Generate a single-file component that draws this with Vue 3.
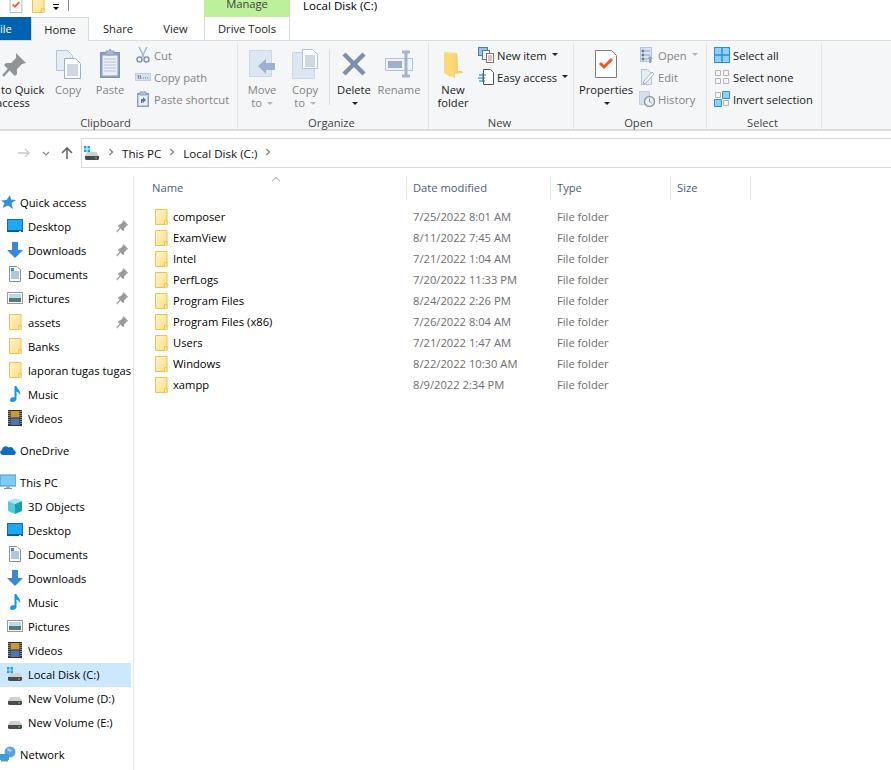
<script setup>
const quick = [
  { name: "Desktop", icon: "desktop", pin: true },
  { name: "Downloads", icon: "downloads", pin: true },
  { name: "Documents", icon: "documents", pin: true },
  { name: "Pictures", icon: "pictures", pin: true },
  { name: "assets", icon: "folder", pin: true },
  { name: "Banks", icon: "folder" },
  { name: "laporan tugas tugas", icon: "folder" },
  { name: "Music", icon: "music" },
  { name: "Videos", icon: "videos" },
];

const thisPc = [
  { name: "3D Objects", icon: "cube" },
  { name: "Desktop", icon: "desktop" },
  { name: "Documents", icon: "documents" },
  { name: "Downloads", icon: "downloads" },
  { name: "Music", icon: "music" },
  { name: "Pictures", icon: "pictures" },
  { name: "Videos", icon: "videos" },
  { name: "Local Disk (C:)", icon: "disk", active: true },
  { name: "New Volume (D:)", icon: "volume" },
  { name: "New Volume (E:)", icon: "volume" },
];

const files = [
  { name: "composer", date: "7/25/2022 8:01 AM" },
  { name: "ExamView", date: "8/11/2022 7:45 AM" },
  { name: "Intel", date: "7/21/2022 1:04 AM" },
  { name: "PerfLogs", date: "7/20/2022 11:33 PM" },
  { name: "Program Files", date: "8/24/2022 2:26 PM" },
  { name: "Program Files (x86)", date: "7/26/2022 8:04 AM" },
  { name: "Users", date: "7/21/2022 1:47 AM" },
  { name: "Windows", date: "8/22/2022 10:30 AM" },
  { name: "xampp", date: "8/9/2022 2:34 PM" },
];
</script>

<template>
  <div class="explorer">
    <svg class="defs" aria-hidden="true">
      <defs>
        <linearGradient id="fold" x1="0" y1="0" x2="1" y2="1">
          <stop offset="0" stop-color="#fff3c8" />
          <stop offset="1" stop-color="#fcdf85" />
        </linearGradient>
        <linearGradient id="bigfold" x1="0" y1="0" x2="1" y2="0">
          <stop offset="0" stop-color="#ffe38c" />
          <stop offset="1" stop-color="#f3c75c" />
        </linearGradient>
        <symbol id="folder" viewBox="0 0 16 16">
          <path d="M2.5 .5h11.500v15H2.5z" fill="url(#fold)" stroke="#eac251" />
          <path d="M11.500 15.500v-4h2.500v4" fill="#fde9a6" stroke="#eac251" />
        </symbol>
        <symbol id="pin" viewBox="0 0 16 16">
          <path d="M9 1l6 6-2 1-3 3 0 3-1.500 .5-6-6L3 7l3-1 2.500-3z" fill="#9a9a9a" transform="translate(0 -1)" />
          <path d="M5 10l-4 5" stroke="#9a9a9a" stroke-width="1.500" />
        </symbol>
        <symbol id="desktop" viewBox="0 0 16 16">
          <rect x="0" y="1" width="16" height="13" fill="#0a6fc4" />
          <rect x="1" y="2" width="14" height="10" fill="#1ea7f2" />
          <rect x="0" y="12.500" width="16" height="1.500" fill="#12557f" />
          <rect x="12" y="13" width="2" height="1" fill="#d9e8f3" />
        </symbol>
        <symbol id="downloads" viewBox="0 0 16 16">
          <path d="M5 0h6v8h5l-8 8-8-8h5z" fill="#3b86d6" />
        </symbol>
        <symbol id="documents" viewBox="0 0 16 16">
          <path d="M2.500 .5h7.500l3.500 3.500v11.500h-11z" fill="#fff" stroke="#8e8e8e" />
          <path d="M4 6h8M4 8h8M4 10h8M4 12h8" stroke="#5e8fc0" />
          <rect x="4" y="2" width="3" height="3" fill="#2f8fdc" />
        </symbol>
        <symbol id="pictures" viewBox="0 0 16 16">
          <rect x=".5" y="2.500" width="15" height="11" fill="#fff" stroke="#9a9a9a" />
          <rect x="2" y="4" width="12" height="4" fill="#bcd9ea" />
          <rect x="2" y="8" width="12" height="4" fill="#4f7f74" />
        </symbol>
        <symbol id="music" viewBox="0 0 16 16">
          <path d="M7.500 0h2c.5 3 5 4.500 3.500 9.500-.5-2.500-2-3.500-3.500-4V13c0 2-2.500 3-4.500 3S2.500 14 3.500 12.500 6 11 7.500 11.500z" fill="#1a95e8" />
        </symbol>
        <symbol id="videos" viewBox="0 0 16 16">
          <rect x="1" y="0" width="14" height="16" fill="#333" />
          <rect x="3.500" y="1" width="9" height="6.500" fill="#c49a3a" />
          <rect x="3.500" y="8.500" width="9" height="6.500" fill="#4d74b8" />
          <path d="M2 1v14M14 1v14" stroke="#ddd" stroke-dasharray="1 1" />
        </symbol>
        <symbol id="star" viewBox="0 0 16 16">
          <path d="M10 1l1 4.500 5 .5-4.500 3L13 15 8 11.500 2.500 14 4.500 9 1 6.500l5.500-.5z" fill="#2f8fdc" />
        </symbol>
        <symbol id="cloud" viewBox="0 0 16 16">
          <path d="M3 13c-3 0-4-4-1-5 0-3 4-5 6.500-2.500C11 4 14 6 13.500 8c2.500 0 3.500 5 0 5z" fill="#0f6cc0" />
        </symbol>
        <symbol id="pc" viewBox="0 0 16 16">
          <rect x="0" y="1" width="16" height="11" fill="#7ecbf5" stroke="#4b95c6" />
          <rect x="6" y="12" width="4" height="2" fill="#9fb8c8" />
          <rect x="4" y="14" width="8" height="1" fill="#7c97a8" />
        </symbol>
        <symbol id="cube" viewBox="0 0 16 16">
          <path d="M8 0l7 3-7 3-7-3z" fill="#a5ecf2" />
          <path d="M1 3l7 3v10l-7-3z" fill="#55cbdb" />
          <path d="M15 3l-7 3v10l7-3z" fill="#1f9cb0" />
        </symbol>
        <symbol id="volume" viewBox="0 0 16 16">
          <path d="M3.500 7h9l2.500 4H1z" fill="#cfcfcf" />
          <path d="M1 11h14v3l-1 1H2l-1-1z" fill="#4a4a4a" />
          <rect x="11" y="12.500" width="2" height="1" fill="#3de05a" />
        </symbol>
        <symbol id="disk" viewBox="0 0 16 16">
          <use href="#volume" x="0" y="0" width="16" height="16" />
          <path d="M0 1h2.500v2.500H0zM3.500 1H6v2.500H3.500zM0 4.500h2.500V7H0zM3.500 4.500H6V7H3.500z" fill="#19a0f0" />
        </symbol>
        <symbol id="network" viewBox="0 0 16 16">
          <circle cx="10" cy="6" r="5.500" fill="#5da3dc" />
          <path d="M7 3c2-1 4 0 5 2-2 1-4 1-5-2z" fill="#a9d3ef" />
          <rect x="0" y="8" width="9" height="6" fill="#3d9be0" />
          <rect x="1" y="14" width="7" height="1.500" fill="#7b8d9b" />
        </symbol>

        <symbol id="bigpin" viewBox="0 0 32 32">
          <path d="M19 5l10 10-4 1-5 5 0 5-2 2-11-11 2-2 5 0 5-5z" fill="#8f9499" />
          <path d="M13 20l-7 8" stroke="#8f9499" stroke-width="2.500" />
        </symbol>
        <symbol id="copy" viewBox="0 0 32 32">
          <path d="M4.500 2.500h11l5 5v15h-16z" fill="#e6ecf6" stroke="#b4c2da" />
          <path d="M12.500 10.500h11l5 5v15h-16z" fill="#fff" stroke="#9eafca" />
          <path d="M15 17h11M15 19h11M15 21h11M15 23h11M15 25h11M15 27h11" stroke="#9eafca" />
        </symbol>
        <symbol id="paste" viewBox="0 0 32 32">
          <rect x="6.500" y="4.500" width="19" height="25" fill="#8c9fbd" stroke="#7f93b3" />
          <rect x="8.500" y="7.500" width="15" height="20" fill="#eaf0f8" />
          <path d="M10 11h12M10 14h12M10 17h12M10 20h12M10 23h12" stroke="#b4c3da" />
          <path d="M12 7V3h3l1-2 1 2h3v4z" fill="#a9b7cd" stroke="#8c9fbd" />
        </symbol>
        <symbol id="cut" viewBox="0 0 16 16">
          <path d="M4 0l5 10M12 0L7 10" stroke="#a9b7cd" stroke-width="1.500" />
          <circle cx="4.500" cy="12.500" r="2.500" fill="none" stroke="#8496b3" stroke-width="1.500" />
          <circle cx="11.500" cy="12.500" r="2.500" fill="none" stroke="#8496b3" stroke-width="1.500" />
        </symbol>
        <symbol id="copypath" viewBox="0 0 16 16">
          <rect x=".5" y="4.500" width="15" height="7" fill="#d5dfee" stroke="#c1cde0" />
          <path d="M3 6l1 4M5 6l1 4M8 9h1M10 9h1M12 9h1" stroke="#6a7d9b" />
        </symbol>
        <symbol id="pasteshort" viewBox="0 0 16 16">
          <rect x="2" y="2" width="12" height="14" fill="#8c9fbd" />
          <rect x="3.500" y="4" width="9" height="10.500" fill="#eaf0f8" />
          <path d="M5 1h6v3H5z" fill="#b4c3da" stroke="#8c9fbd" />
          <path d="M6 12V8h2V6l3 3-3 3v-2H7.500v2z" fill="#5e7496" />
        </symbol>
        <symbol id="moveto" viewBox="0 0 32 32">
          <path d="M3.500 2.500h22v26h-22z" fill="#dde6f3" stroke="#cbd7e9" />
          <path d="M12 18l8-7v4h9v7h-9v4z" fill="#9eb0cb" />
        </symbol>
        <symbol id="copyto" viewBox="0 0 32 32">
          <path d="M3.500 4.500h22v26h-22z" fill="#dde6f3" stroke="#cbd7e9" />
          <path d="M13.500 1.500h10l5 5v14h-15z" fill="#fff" stroke="#b4c2da" />
          <path d="M16 8h10M16 10h10M16 12h10M16 14h10M16 16h10M16 18h10" stroke="#9eafca" />
        </symbol>
        <symbol id="delete" viewBox="0 0 32 32">
          <path d="M6 6l20 20M26 6L6 26" stroke="#7e8fae" stroke-width="4.500" />
        </symbol>
        <symbol id="rename" viewBox="0 0 32 32">
          <rect x="2.500" y="10.500" width="27" height="12" fill="#eef2f9" stroke="#b4c3da" />
          <rect x="5" y="13" width="14" height="7" fill="#9eb0cb" />
          <path d="M19 4h8M23 4v24M19 28h8" stroke="#a4b4ce" stroke-width="3" fill="none" />
        </symbol>
        <symbol id="newfolder" viewBox="0 0 32 32">
          <path d="M7 4l13 1c1 7 1 13 1 18h4l1 2-8 1v4l-11-5z" fill="url(#bigfold)" />
          <path d="M7 4l6 3v22l-6-4z" fill="#fbd977" />
        </symbol>
        <symbol id="newitem" viewBox="0 0 16 16">
          <rect x=".5" y=".5" width="9" height="8" fill="#8fc6ee" stroke="#5f7896" />
          <rect x="4.500" y="3.500" width="7" height="9" fill="#f2f4f7" stroke="#5f7896" />
          <rect x="8.500" y="6.500" width="7" height="9" fill="#fff" stroke="#8a6f72" />
          <path d="M10 9h4M10 11h4M10 13h4" stroke="#c77e7e" />
        </symbol>
        <symbol id="easy" viewBox="0 0 16 16">
          <path d="M5.500 .5h7l3 3v12h-10z" fill="#fff" stroke="#555" />
          <path d="M1 6h7M0 9h7M1 12h6" stroke="#2374b8" stroke-width="1.200" />
          <path d="M5 4v9" stroke="#2374b8" />
        </symbol>
        <symbol id="properties" viewBox="0 0 32 32">
          <path d="M5.500 2.500h16l5 5v22h-21z" fill="#fff" stroke="#7d7d7d" />
          <path d="M10 15l4 4 8-8" fill="none" stroke="#ef5a24" stroke-width="3" />
        </symbol>
        <symbol id="open" viewBox="0 0 16 16">
          <rect x="1.500" y=".5" width="11" height="14" fill="#d9e2f0" stroke="#b4c3da" />
          <path d="M3 3h2v2H3zM3 7h2v2H3zM3 11h2v2H3zM6 4h5M6 8h5M6 12h2" stroke="#8ea1bf" />
          <path d="M8 12l3-3 3 3h-2v4h-2v-4z" fill="#8ea1bf" />
        </symbol>
        <symbol id="edit" viewBox="0 0 16 16">
          <path d="M2.500 .5h6l4 4v11h-10z" fill="#e6ecf6" stroke="#b4c3da" />
          <path d="M5 12l8-9 2 2-8 9-3 1z" fill="#fff" stroke="#a4b4ce" />
        </symbol>
        <symbol id="history" viewBox="0 0 16 16">
          <rect x=".5" y=".5" width="10" height="13" fill="#d5dfee" stroke="#c1cde0" />
          <circle cx="10.500" cy="10.500" r="5" fill="#eef1f6" stroke="#8f9bab" stroke-width="1.500" />
          <path d="M10.500 7.500v3l2 1.500" fill="none" stroke="#7b8797" />
        </symbol>
        <symbol id="selall" viewBox="0 0 16 16">
          <rect x=".5" y=".5" width="15" height="15" fill="#90d0f7" stroke="#2a8fdc" />
          <path d="M8 0v16M0 8h16" stroke="#2a8fdc" stroke-width="1.500" />
        </symbol>
        <symbol id="selnone" viewBox="0 0 16 16">
          <path d="M1.500 1.500h5v5h-5zM9.500 1.500h5v5h-5zM1.500 9.500h5v5h-5zM9.500 9.500h5v5h-5z" fill="none" stroke="#b5b5b5" />
        </symbol>
        <symbol id="invert" viewBox="0 0 16 16">
          <path d="M1.500 1.500h5v5h-5zM9.500 9.500h5v5h-5z" fill="none" stroke="#b5b5b5" />
          <path d="M8.500 .5h7v7h-7zM.5 8.500h7v7h-7z" fill="#90d0f7" stroke="#2a8fdc" />
        </symbol>
        <symbol id="crumb" viewBox="0 0 6 10">
          <path d="M1.500 2l3 3-3 3" fill="none" stroke="#808080" stroke-width="1.300" />
        </symbol>
      </defs>
    </svg>

    <header class="titlebar">
      <div class="qat">
        <svg class="qat-prop"><use href="#properties" /></svg>
        <svg class="qat-folder"><use href="#folder" /></svg>
        <span class="qat-drop"></span>
        <span class="qat-sep"></span>
      </div>
      <div class="manage">Manage</div>
      <div class="title">Local Disk (C:)</div>
    </header>

    <nav class="tabs">
      <div class="tab file">File</div>
      <div class="tab home">Home</div>
      <div class="tab share">Share</div>
      <div class="tab view">View</div>
      <div class="tab drive">Drive Tools</div>
    </nav>

    <section class="ribbon">
      <div class="group clipboard">
        <div class="group-body">
          <div class="big w70">
            <svg class="ic32"><use href="#bigpin" /></svg>
            <span class="dark">Pin to Quick<br />access</span>
          </div>
          <div class="big w40">
            <svg class="ic32"><use href="#copy" /></svg>
            <span>Copy</span>
          </div>
          <div class="big w44">
            <svg class="ic32"><use href="#paste" /></svg>
            <span>Paste</span>
          </div>
          <div class="smalls pl3">
            <div class="small"><svg class="ic16"><use href="#cut" /></svg>Cut</div>
            <div class="small"><svg class="ic16"><use href="#copypath" /></svg>Copy path</div>
            <div class="small"><svg class="ic16"><use href="#pasteshort" /></svg>Paste shortcut</div>
          </div>
        </div>
        <div class="group-label">Clipboard</div>
      </div>

      <div class="group organize">
        <div class="group-body">
          <div class="big w42">
            <svg class="ic32"><use href="#moveto" /></svg>
            <span>Move<br />to <i class="caret grey"></i></span>
          </div>
          <div class="big w42 ml1">
            <svg class="ic32"><use href="#copyto" /></svg>
            <span>Copy<br />to <i class="caret grey"></i></span>
          </div>
          <div class="vline"></div>
          <div class="big w42">
            <svg class="ic32"><use href="#delete" /></svg>
            <span class="dark">Delete<br /><i class="caret"></i></span>
          </div>
          <div class="big w44 ml2">
            <svg class="ic32"><use href="#rename" /></svg>
            <span>Rename</span>
          </div>
        </div>
        <div class="group-label">Organize</div>
      </div>

      <div class="group new">
        <div class="group-body">
          <div class="big w40">
            <svg class="ic32"><use href="#newfolder" /></svg>
            <span class="dark">New<br />folder</span>
          </div>
          <div class="smalls pl5">
            <div class="small dark"><svg class="ic16"><use href="#newitem" /></svg>New item <i class="caret"></i></div>
            <div class="small dark"><svg class="ic16"><use href="#easy" /></svg>Easy access <i class="caret"></i></div>
          </div>
        </div>
        <div class="group-label">New</div>
      </div>

      <div class="group open">
        <div class="group-body">
          <div class="big w64">
            <svg class="ic32"><use href="#properties" /></svg>
            <span class="dark">Properties<br /><i class="caret"></i></span>
          </div>
          <div class="smalls tight">
            <div class="small"><svg class="ic16"><use href="#open" /></svg>Open <i class="caret grey"></i></div>
            <div class="small"><svg class="ic16"><use href="#edit" /></svg>Edit</div>
            <div class="small"><svg class="ic16"><use href="#history" /></svg>History</div>
          </div>
        </div>
        <div class="group-label">Open</div>
      </div>

      <div class="group select">
        <div class="group-body">
          <div class="smalls pl7">
            <div class="small dark"><svg class="ic16"><use href="#selall" /></svg>Select all</div>
            <div class="small dark"><svg class="ic16"><use href="#selnone" /></svg>Select none</div>
            <div class="small dark"><svg class="ic16"><use href="#invert" /></svg>Invert selection</div>
          </div>
        </div>
        <div class="group-label">Select</div>
      </div>
    </section>

    <div class="addressrow">
      <div class="navs">
        <svg class="nav-ic" viewBox="0 0 14 14"><path d="M1 7h11M8 3l4 4-4 4" fill="none" stroke="#ccc" stroke-width="1.300" /></svg>
        <svg class="nav-chev" viewBox="0 0 8 5"><path d="M1 1l3 3 3-3" fill="none" stroke="#888" stroke-width="1.200" /></svg>
        <svg class="nav-ic up" viewBox="0 0 14 14"><path d="M7 13V2M2 7l5-5 5 5" fill="none" stroke="#666" stroke-width="1.600" /></svg>
      </div>
      <div class="address">
        <svg class="ic16"><use href="#disk" /></svg>
        <svg class="chev"><use href="#crumb" /></svg>
        <span>This PC</span>
        <svg class="chev"><use href="#crumb" /></svg>
        <span>Local Disk (C:)</span>
        <svg class="chev"><use href="#crumb" /></svg>
      </div>
    </div>

    <div class="body">
      <aside class="sidebar">
        <div class="node head"><svg class="ic16"><use href="#star" /></svg>Quick access</div>
        <div v-for="item in quick" :key="item.name" class="node">
          <svg class="ic16"><use :href="'#' + item.icon" /></svg>
          <span class="node-name">{{ item.name }}</span>
          <svg v-if="item.pin" class="pin"><use href="#pin" /></svg>
        </div>
        <div class="node head gap"><svg class="ic16"><use href="#cloud" /></svg>OneDrive</div>
        <div class="node head gap"><svg class="ic16"><use href="#pc" /></svg>This PC</div>
        <div v-for="item in thisPc" :key="item.name + item.icon" class="node" :class="{ active: item.active }">
          <svg class="ic16"><use :href="'#' + item.icon" /></svg>
          <span class="node-name">{{ item.name }}</span>
        </div>
        <div class="node head gap"><svg class="ic16"><use href="#network" /></svg>Network</div>
      </aside>

      <main class="list">
        <div class="sort"></div>
        <div class="cols">
          <div class="col c-name">Name</div>
          <div class="col c-date">Date modified</div>
          <div class="col c-type">Type</div>
          <div class="col c-size">Size</div>
        </div>
        <div class="rows">
          <div v-for="f in files" :key="f.name" class="row">
            <div class="c-name file-name"><svg class="ic16"><use href="#folder" /></svg>{{ f.name }}</div>
            <div class="c-date meta">{{ f.date }}</div>
            <div class="c-type meta">File folder</div>
          </div>
        </div>
      </main>
    </div>
  </div>
</template>

<style scoped>
.explorer {
  width: 891px;
  height: 770px;
  overflow: hidden;
  display: flex;
  flex-direction: column;
  background: #fff;
  font-family: "Open Sans", "Noto Sans", sans-serif;
  font-size: 11.2px;
  color: #000;
}
.defs {
  position: absolute;
  width: 0;
  height: 0;
}
.ic16 {
  width: 16px;
  height: 16px;
  flex: none;
}
.ic32 {
  width: 32px;
  height: 32px;
  flex: none;
  display: block;
}

.titlebar {
  height: 17px;
  display: flex;
  flex: none;
  overflow: hidden;
}
.qat {
  width: 204px;
  display: flex;
  align-items: flex-start;
}
.qat-prop {
  width: 18px;
  height: 18px;
  margin: -4px 0 0 7px;
}
.qat-folder {
  width: 16px;
  height: 18px;
  margin: -4px 0 0 5px;
}
.qat-drop {
  width: 6px;
  height: 4px;
  margin: 4px 1px 0 7px;
  border-top: 1px solid #000;
  position: relative;
}
.qat-drop::after {
  content: "";
  position: absolute;
  left: 0;
  top: 2px;
  border: 3px solid transparent;
  border-top-color: #000;
  border-bottom: 0;
}
.qat-sep {
  width: 1px;
  height: 11px;
  margin-left: 8px;
  background: #8a8a8a;
}
.manage {
  width: 86px;
  height: 17px;
  background: #bdf09a;
  color: #444;
  text-align: center;
  line-height: 8px;
}
.title {
  margin-left: 13px;
  line-height: 11px;
  font-size: 11.6px;
}

.tabs {
  height: 23px;
  display: flex;
  flex: none;
}
.tab {
  line-height: 24px;
  text-align: center;
  color: #222;
}
.file {
  width: 56px;
  margin-left: -25px;
  background: #0063b1;
  color: #fff;
}
.home {
  width: 58px;
  height: 24px;
  background: #f5f6f7;
  border: 1px solid #dadbdc;
  border-bottom: 0;
  box-sizing: border-box;
  line-height: 23px;
  position: relative;
  z-index: 1;
}
.share {
  width: 58px;
}
.view {
  width: 57px;
}
.drive {
  width: 86px;
  box-sizing: border-box;
  border: 1px solid #dadbdc;
  border-width: 0 1px;
}

.ribbon {
  height: 91px;
  flex: none;
  display: flex;
  margin-left: -23px;
  width: 914px;
  box-sizing: border-box;
  background: #f5f6f7;
  border-top: 1px solid #dadbdc;
  border-bottom: 2px solid #dadbdc;
  color: #838383;
}
.group {
  box-sizing: border-box;
  margin-top: 2px;
  display: flex;
  flex-direction: column;
  border-right: 1px solid #e2e3e4;
}
.clipboard {
  width: 261px;
}
.clipboard .group-body {
  padding-left: 1px;
}
.organize {
  width: 191px;
}
.organize .group-body {
  padding-left: 3px;
}
.new {
  width: 145px;
}
.new .group-body {
  padding-left: 4px;
}
.open {
  width: 133px;
}
.select {
  width: 115px;
}
.group-body {
  flex: 1;
  display: flex;
  padding-top: 5px;
}
.group-label {
  height: 14px;
  line-height: 16px;
  padding-right: 3px;
  text-align: center;
  color: #444;
}
.big {
  flex: none;
  display: flex;
  flex-direction: column;
  align-items: center;
  text-align: center;
  line-height: 13px;
}
.big span {
  margin-top: 3px;
  white-space: nowrap;
}
.w40 {
  width: 40px;
}
.w42 {
  width: 42px;
}
.w44 {
  width: 44px;
}
.w64 {
  width: 64px;
}
.w70 {
  width: 70px;
}
.ml1 {
  margin-left: 1px;
}
.ml2 {
  margin-left: 2px;
}
.dark {
  color: #1a1a1a;
}
.vline {
  width: 1px;
  height: 55px;
  margin: 2px 3px 0 3px;
  background: #dadbdc;
}
.smalls {
  display: flex;
  flex-direction: column;
  margin-top: -4px;
}
.pl3 {
  padding-left: 3px;
}
.pl5 {
  padding-left: 5px;
}
.pl7 {
  padding-left: 7px;
}
.tight {
  padding-left: 1px;
}
.small {
  height: 22px;
  display: flex;
  align-items: center;
  gap: 3px;
  white-space: nowrap;
}
.caret {
  display: inline-block;
  width: 0;
  height: 0;
  margin: 0 0 2px 2px;
  border: 3px solid transparent;
  border-top-color: #222;
  border-bottom: 0;
}
.caret.grey {
  border-top-color: #b5b5b5;
}

.addressrow {
  height: 45px;
  flex: none;
  display: flex;
  align-items: flex-start;
  padding-top: 7px;
  box-sizing: border-box;
}
.navs {
  width: 81px;
  height: 30px;
  display: flex;
  align-items: center;
  flex: none;
}
.nav-ic {
  width: 14px;
  height: 14px;
  margin-left: 17px;
}
.nav-chev {
  width: 8px;
  height: 5px;
  margin-left: 11px;
}
.nav-ic.up {
  margin-left: 10px;
}
.address {
  flex: 1;
  height: 30px;
  box-sizing: border-box;
  border: 1px solid #d9d9d9;
  border-right: 0;
  display: flex;
  align-items: center;
  padding-left: 2px;
  color: #111;
  font-size: 11.6px;
}
.chev {
  width: 6px;
  height: 10px;
  margin: 0 8px 2px;
  flex: none;
}
.chev:nth-of-type(2) {
  margin-left: 8px;
}

.body {
  flex: 1;
  display: flex;
  min-height: 0;
}
.sidebar {
  width: 134px;
  flex: none;
  box-sizing: border-box;
  border-right: 1px solid #e5e5e5;
  padding-top: 15px;
  overflow: hidden;
}
.node {
  width: 131px;
  height: 24px;
  display: flex;
  align-items: center;
  gap: 5px;
  padding: 0 0 2px 7px;
  box-sizing: border-box;
  white-space: nowrap;
  overflow: hidden;
  position: relative;
}
.node-name {
  overflow: hidden;
}
.head {
  padding-left: 0;
  gap: 4px;
}
.gap {
  margin-top: 8px;
}
.active {
  background: #cce8ff;
}
.pin {
  position: absolute;
  left: 116px;
  top: 5px;
  width: 13px;
  height: 13px;
}

.list {
  flex: 1;
  position: relative;
  padding-left: 18px;
}
.sort {
  position: absolute;
  left: 138px;
  top: 0;
  width: 7px;
  height: 7px;
  border: 1px solid #9a9a9a;
  border-width: 1px 0 0 1px;
  transform: translateY(1px) rotate(45deg) scale(.72);
}
.cols {
  height: 24px;
  display: flex;
  align-items: center;
  color: #4c607a;
}
.col {
  height: 24px;
  line-height: 24px;
  box-sizing: border-box;
  border-right: 1px solid #e5e5e5;
}
.c-name {
  width: 255px;
  flex: none;
}
.c-date {
  width: 144px;
  flex: none;
  padding-left: 6px;
  box-sizing: border-box;
}
.c-type {
  width: 120px;
  flex: none;
  padding-left: 6px;
  box-sizing: border-box;
}
.c-size {
  width: 80px;
  flex: none;
  padding-left: 6px;
}
.rows {
  padding-top: 6px;
}
.row {
  height: 21px;
  display: flex;
  align-items: center;
}
.file-name {
  display: flex;
  align-items: center;
  gap: 4px;
  margin-left: 1px;
  width: 254px;
}
.meta {
  color: #6d6d6d;
}
</style>
